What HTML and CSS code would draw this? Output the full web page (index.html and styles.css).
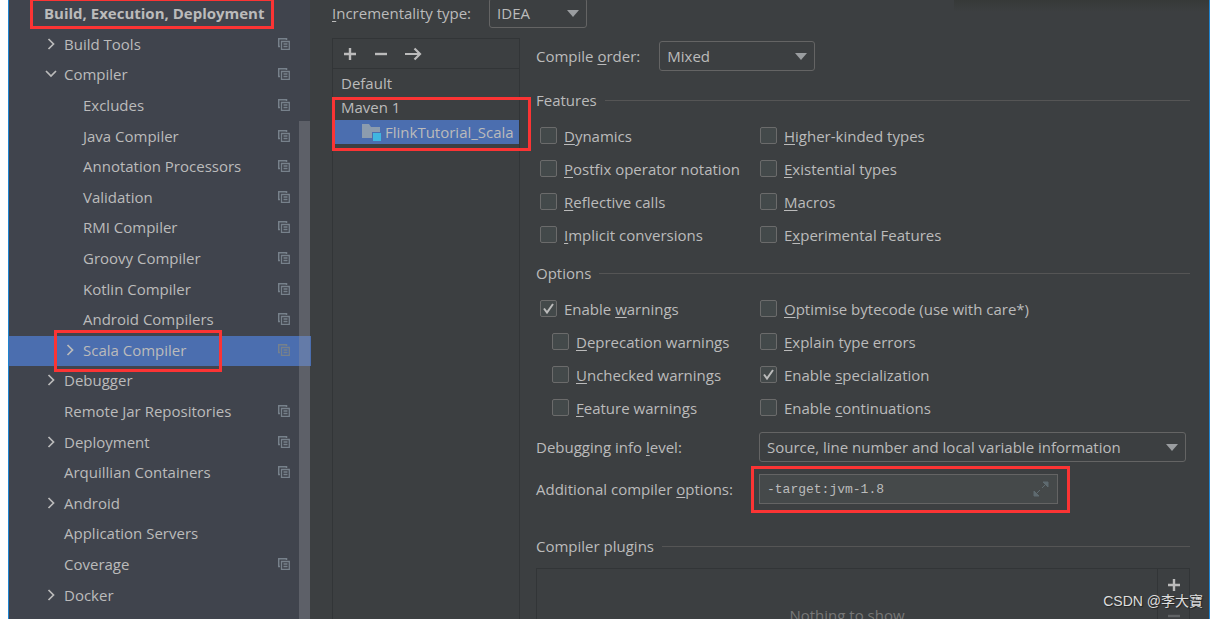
FILE: index.html
```html
<!DOCTYPE html>
<html lang="en">
<head>
<meta charset="utf-8">
<title>Settings</title>
<link rel="stylesheet" href="styles.css">
</head>
<body>
<svg class="defs" aria-hidden="true">
  <symbol id="copy" viewBox="0 0 12 12"><path d="M2 8.500H.7V.8H8.500V2" fill="none" stroke="currentColor" stroke-width="1.500"/><path d="M3.500 3.500H11.300V11.300H3.500ZM5.500 6H9.500M5.500 8.500H9.500" fill="none" stroke="currentColor" stroke-width="1.300"/></symbol>
  <symbol id="right" viewBox="0 0 12 12"><path d="M3.500 1L8.500 6L3.500 11" fill="none" stroke="currentColor" stroke-width="1.7"/></symbol>
  <symbol id="down" viewBox="0 0 12 12"><path d="M1 3L6 8L11 3" fill="none" stroke="currentColor" stroke-width="1.7"/></symbol>
  <symbol id="plus" viewBox="0 0 14 14"><path d="M7 1V13M1 7H13" fill="none" stroke="currentColor" stroke-width="2.4"/></symbol>
  <symbol id="minus" viewBox="0 0 14 14"><path d="M1 7H13" fill="none" stroke="currentColor" stroke-width="2.4"/></symbol>
  <symbol id="arrow" viewBox="0 0 18 14"><path d="M0 7H15M9.500 1.500L15 7L9.500 12.500" fill="none" stroke="currentColor" stroke-width="2.2"/></symbol>
  <symbol id="caret" viewBox="0 0 12 7"><path d="M0 0H12L6 7Z" fill="currentColor"/></symbol>
</svg>
<div class="window">
  <nav class="sidebar" aria-label="Settings categories">
    <ul class="tree">
      <li class="row top"><span class="marked mark-heading">Build, Execution, Deployment</span></li>
      <li class="row"><svg class="chevron"><use href="#right"/></svg><span>Build Tools</span><svg class="copy"><use href="#copy"/></svg></li>
      <li class="row"><svg class="chevron"><use href="#down"/></svg><span>Compiler</span><svg class="copy"><use href="#copy"/></svg></li>
      <li class="row deep"><span>Excludes</span><svg class="copy"><use href="#copy"/></svg></li>
      <li class="row deep"><span>Java Compiler</span><svg class="copy"><use href="#copy"/></svg></li>
      <li class="row deep"><span>Annotation Processors</span><svg class="copy"><use href="#copy"/></svg></li>
      <li class="row deep"><span>Validation</span><svg class="copy"><use href="#copy"/></svg></li>
      <li class="row deep"><span>RMI Compiler</span><svg class="copy"><use href="#copy"/></svg></li>
      <li class="row deep"><span>Groovy Compiler</span><svg class="copy"><use href="#copy"/></svg></li>
      <li class="row deep"><span>Kotlin Compiler</span><svg class="copy"><use href="#copy"/></svg></li>
      <li class="row deep"><span>Android Compilers</span><svg class="copy"><use href="#copy"/></svg></li>
      <li class="row deep selected marked mark-scala"><svg class="chevron"><use href="#right"/></svg><span>Scala Compiler</span><svg class="copy"><use href="#copy"/></svg></li>
      <li class="row"><svg class="chevron"><use href="#right"/></svg><span>Debugger</span></li>
      <li class="row"><span>Remote Jar Repositories</span><svg class="copy"><use href="#copy"/></svg></li>
      <li class="row"><svg class="chevron"><use href="#right"/></svg><span>Deployment</span><svg class="copy"><use href="#copy"/></svg></li>
      <li class="row"><span>Arquillian Containers</span><svg class="copy"><use href="#copy"/></svg></li>
      <li class="row"><svg class="chevron"><use href="#right"/></svg><span>Android</span></li>
      <li class="row"><span>Application Servers</span></li>
      <li class="row"><span>Coverage</span><svg class="copy"><use href="#copy"/></svg></li>
      <li class="row"><svg class="chevron"><use href="#right"/></svg><span>Docker</span></li>
    </ul>
    <div class="scrollbar"></div>
  </nav>

  <main class="content">
    <div class="field incremental">
      <label for="inc"><u>I</u>ncrementality type:</label>
      <div class="select small"><select id="inc"><option>IDEA</option></select><svg><use href="#caret"/></svg></div>
    </div>
    <div class="columns">
      <section class="profiles">
        <div class="toolbar">
          <button aria-label="Add profile"><svg><use href="#plus"/></svg></button>
          <button aria-label="Remove profile"><svg><use href="#minus"/></svg></button>
          <button aria-label="Move to profile"><svg class="wide"><use href="#arrow"/></svg></button>
        </div>
        <ul class="list">
          <li>Default</li>
          <li>Maven 1</li>
          <li class="module marked mark-module">
            <svg viewBox="0 0 20 18"><path d="M0 1H7L9 4H18V15H0Z" fill="#8c9cae"/><path d="M10 9H20V18H10Z" fill="#4b6eaf"/><path d="M11 10H19V18H11Z" fill="#40b6e0"/></svg>
            <span>FlinkTutorial_Scala</span>
          </li>
        </ul>
      </section>

      <form class="settings">
        <div class="field order">
          <label for="order">Compile <u>o</u>rder:</label>
          <div class="select medium"><select id="order"><option>Mixed</option></select><svg><use href="#caret"/></svg></div>
        </div>

        <h2>Features</h2>
        <div class="checks">
          <label><input type="checkbox"><span><u>D</u>ynamics</span></label>
          <label><input type="checkbox"><span><u>H</u>igher-kinded types</span></label>
          <label><input type="checkbox"><span><u>P</u>ostfix operator notation</span></label>
          <label><input type="checkbox"><span><u>E</u>xistential types</span></label>
          <label><input type="checkbox"><span><u>R</u>eflective calls</span></label>
          <label><input type="checkbox"><span><u>M</u>acros</span></label>
          <label><input type="checkbox"><span><u>I</u>mplicit conversions</span></label>
          <label><input type="checkbox"><span>E<u>x</u>perimental Features</span></label>
        </div>

        <h2>Options</h2>
        <div class="checks">
          <label><input type="checkbox" checked><span>Enable <u>w</u>arnings</span></label>
          <label><input type="checkbox"><span><u>O</u>ptimise bytecode (use with care*)</span></label>
          <label class="nested"><input type="checkbox"><span><u>D</u>eprecation warnings</span></label>
          <label><input type="checkbox"><span><u>E</u>xplain type errors</span></label>
          <label class="nested"><input type="checkbox"><span><u>U</u>nchecked warnings</span></label>
          <label><input type="checkbox" checked><span>Enable <u>s</u>pecialization</span></label>
          <label class="nested"><input type="checkbox"><span><u>F</u>eature warnings</span></label>
          <label><input type="checkbox"><span>Enable <u>c</u>ontinuations</span></label>
        </div>

        <div class="form">
          <label for="debug">Debugging info <u>l</u>evel:</label>
          <div class="select full"><select id="debug"><option>Source, line number and local variable information</option></select><svg><use href="#caret"/></svg></div>
          <label for="extra">Additional compiler <u>o</u>ptions:</label>
          <div class="text marked mark-input">
            <input id="extra" type="text" value="-target:jvm-1.8">
            <svg viewBox="0 0 16 16"><path d="M9 7L14 2M10 1H15V6ZM7 9L2 14M1 10V15H6Z" fill="#5f6b70" stroke="#5f6b70"/></svg>
          </div>
        </div>

        <h2>Compiler plugins</h2>
        <div class="plugins">
          <p>Nothing to show</p>
          <div class="side">
            <button type="button" aria-label="Add plugin"><svg><use href="#plus"/></svg></button>
            <button type="button" aria-label="Remove plugin" disabled><svg><use href="#minus"/></svg></button>
          </div>
        </div>
      </form>
    </div>
  </main>
  <div class="shade"></div>
</div>
<div class="watermark">CSDN @李大寶</div>
</body>
</html>
```

FILE: styles.css
```css
* { box-sizing: border-box; }
body {
  margin: 0;
  height: 100vh;
  padding: 0 9px 0 8px;
  overflow: hidden;
  background: #fff;
  color: #bbb;
  font: 15px/20px "Open Sans", "Noto Sans", sans-serif;
}
ul, h2, p { margin: 0; padding: 0; list-style: none; font-weight: 400; font-size: inherit; }
button, input, select { font: inherit; color: inherit; margin: 0; }
button { padding: 0; border: 0; background: none; display: flex; }
u { text-underline-offset: 2px; text-decoration-thickness: 1px; }
.defs { display: none; }

.window {
  position: relative;
  display: flex;
  height: 100%;
  overflow: hidden;
  background: #3c3f41;
  border: solid #1f84d0;
  border-width: 0 1px;
}

.sidebar {
  position: relative;
  flex: 0 0 302px;
  padding-bottom: 8px;
  background: linear-gradient(90deg, #40444d 301px, #3c3f41 301px);
}
.tree {
  display: grid;
  grid-auto-rows: 1fr;
  height: calc(100% + 1px);
  margin-top: -1px;
}
.row {
  display: flex;
  align-items: center;
  padding: 0 21px 2px 55px;
  white-space: nowrap;
}
.row.top { padding-left: 35px; font-weight: 700; }
.row.deep { padding-left: 74px; }
.chevron { width: 12px; height: 12px; margin: 0 7px 0 -19px; color: #bbb; }
.copy { width: 12px; height: 12px; margin-left: auto; color: #77818b; }
.selected { background: #4b6eaf; }
.scrollbar {
  position: absolute;
  top: 121px;
  right: 1px;
  bottom: 0;
  width: 11px;
  background: rgba(150, 150, 155, .35);
}

/* red callout frames */
.marked { position: relative; }
.marked::after {
  content: "";
  position: absolute;
  z-index: 2;
  border: 3px solid #fb3434;
  pointer-events: none;
}
.mark-heading::after { inset: -5px -9px -6px -14px; }
.mark-scala::after { inset: -6px 89px -6px 45px; }
.mark-module::after { inset: -23px -12px -7px -1px; }
.mark-input::after { inset: -8px -12px -9px -8px; }

.content {
  flex: 1;
  min-width: 0;
  display: flex;
  flex-direction: column;
  padding: 0 19px 0 21px;
}
.field { display: flex; align-items: center; }
.incremental { gap: 18px; height: 38px; padding-bottom: 12px; }
.select { position: relative; height: 30px; }
.select select {
  appearance: none;
  width: 100%;
  height: 100%;
  padding: 0 30px 0 7px;
  border: 1px solid #646464;
  border-radius: 3px;
  background: #3c3f41;
}
.select svg {
  position: absolute;
  right: 8px;
  top: 12px;
  width: 12px;
  height: 7px;
  color: #9a9da0;
  pointer-events: none;
}
.small { width: 98px; }
.medium { width: 156px; }

.columns { flex: 1; display: flex; gap: 16px; min-height: 0; }
.profiles { flex: 0 0 188px; border: 1px solid #323537; border-bottom: 0; }
.toolbar {
  display: flex;
  align-items: center;
  gap: 17px;
  height: 30px;
  padding-left: 10px;
  border-bottom: 1px solid #323537;
}
.toolbar svg, .side svg { width: 14px; height: 14px; }
.toolbar .wide { width: 18px; }
.list { padding-top: 3px; }
.list li {
  display: flex;
  align-items: center;
  height: 24px;
  padding: 0 0 3px 8px;
  white-space: nowrap;
}
.list .module { padding: 0 0 0 29px; gap: 3px; background: #4b6eaf; }
.module svg { flex: none; width: 20px; height: 18px; }

.settings { flex: 1; min-width: 0; display: flex; flex-direction: column; }
.order { gap: 19px; padding-top: 3px; }
h2 { display: flex; align-items: center; gap: 8px; margin-top: 12px; }
h2::after { content: ""; flex: 1; height: 1px; background: #555; }
.order + h2 { margin-top: 19px; }
.form + h2 { margin-top: 32px; }
.checks {
  display: grid;
  grid-template-columns: 220px 1fr;
  grid-auto-rows: 33px;
  padding: 9px 0 0 4px;
}
.checks label { display: flex; align-items: center; gap: 7px; white-space: nowrap; }
.checks .nested { padding-left: 12px; }
.checks input {
  appearance: none;
  flex: none;
  width: 17px;
  height: 17px;
  border: 1px solid #6b6b6b;
  border-radius: 2px;
  background: #43494a;
}
.checks input:checked {
  background: #43494a url("data:image/svg+xml,%3Csvg xmlns='http://www.w3.org/2000/svg' viewBox='0 0 15 15'%3E%3Cpath d='M3 7.500L6 11.500L12 3' fill='none' stroke='%23bbb' stroke-width='2'/%3E%3C/svg%3E");
}
.form {
  display: grid;
  grid-template-columns: 223px 1fr;
  align-items: center;
  row-gap: 12px;
  padding: 8px 4px 0 0;
  white-space: nowrap;
}
.text { display: flex; align-items: center; width: 70%; height: 30px; }
.text input {
  width: 100%;
  height: 100%;
  padding: 0 40px 0 7px;
  border: 1px solid #646464;
  background: #45494a;
  font: 13px "Liberation Mono", monospace;
}
.text svg { position: absolute; right: 9px; width: 16px; height: 16px; }
.plugins {
  flex: 1;
  display: flex;
  min-height: 0;
  margin-top: 12px;
  border: 1px solid #323537;
  border-bottom: 0;
}
.plugins p { flex: 1; padding-top: 36px; text-align: center; color: #777; }
.side {
  display: flex;
  flex-direction: column;
  align-items: center;
  gap: 17px;
  width: 32px;
  padding-top: 9px;
  border-left: 1px solid #323537;
}
.side button:disabled { color: #606365; }

.shade {
  position: absolute;
  top: 0;
  right: 0;
  width: 255px;
  height: 12px;
  background: linear-gradient(#363938, rgba(60, 63, 65, 0));
}
.watermark {
  position: absolute;
  right: 16px;
  bottom: 8px;
  color: #ddd;
  font: 14px/20px "Liberation Sans", "Noto Sans CJK TC", sans-serif;
  text-shadow: 1px 1px 1px #222;
}
```
